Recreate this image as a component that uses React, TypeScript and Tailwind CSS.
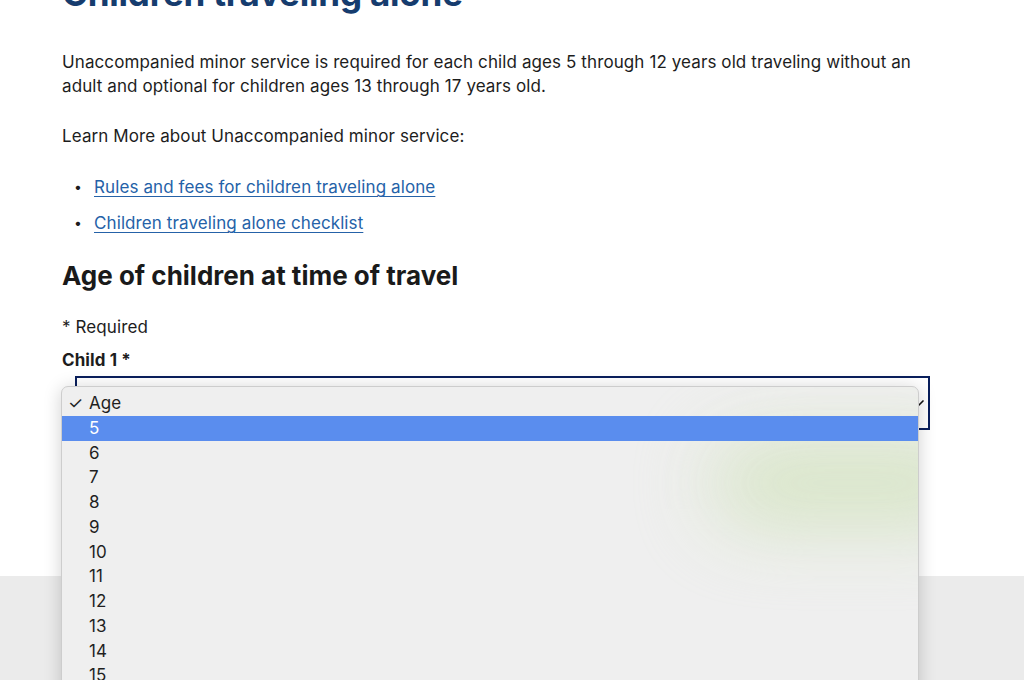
import { ChevronDown } from 'lucide-react';

const ages = ['5', '6', '7', '8', '9', '10', '11', '12', '13', '14', '15', '16', '17'];

export default function App() {
  return (
    <div className="relative flex flex-col h-[680px] overflow-hidden bg-white font-['Inter',sans-serif] text-[#1d1d1d]">
      <section className="flex flex-col shrink-0 px-[62px] h-[576px]">
        <div className="w-[868px] tracking-[0.1px]">
          <h1 className="-mt-[29px] text-[35px] leading-[44px] font-bold text-[#163c6e] tracking-[-0.2px]">
            Children traveling alone
          </h1>

          <p className="mt-[35px] text-[17px] leading-[24px]">
            Unaccompanied minor service is required for each child ages 5 through 12 years old traveling without an
            adult and optional for children ages 13 through 17 years old.
          </p>

          <p className="mt-[26px] text-[17px] leading-[24px]">Learn More about Unaccompanied minor service:</p>

          <ul className="mt-[27px] flex flex-col gap-[12px] text-[17px] leading-[24px]">
            <li className="flex items-center">
              <span className="w-[32px] pl-[12px] text-[14px]">&#8226;</span>
              <a href="#" className="text-[#2562a8] underline underline-offset-[3px] decoration-1">
                Rules and fees for children traveling alone
              </a>
            </li>
            <li className="flex items-center">
              <span className="w-[32px] pl-[12px] text-[14px]">&#8226;</span>
              <a href="#" className="text-[#2562a8] underline underline-offset-[3px] decoration-1">
                Children traveling alone checklist
              </a>
            </li>
          </ul>

          <h2 className="mt-[25px] text-[26px] leading-[32px] font-bold text-[#1a1a1a] tracking-normal">
            Age of children at time of travel
          </h2>

          <p className="mt-[23px] text-[17px] leading-[24px]">* Required</p>

          <label className="mt-[9px] block text-[17px] leading-[24px] font-bold">Child 1 *</label>

          <div className="relative mt-[4px]">
            <div className="ml-[13px] h-[54px] border-2 border-[#0a1f5c] flex items-center justify-end pr-[1px]">
              <ChevronDown className="w-4 h-4 text-[#111]" strokeWidth={2.5} />
            </div>

            {/* native select popup */}
            <div className="absolute left-[-1px] top-[10px] w-[858px] h-[320px] overflow-hidden rounded-t-[7px] border border-[#cdcdcd] bg-[#efefef] shadow-[0_2px_18px_rgba(0,0,0,0.18)]">
              <div className="absolute left-[650px] top-[56px] w-[280px] h-[80px] rounded-full bg-[#d2e3bd] opacity-90 blur-2xl pointer-events-none" />
              <div className="relative pt-[4px] text-[17px] leading-[24.75px] text-[#1f1f1f] tracking-normal">
                <div className="flex items-center">
                  <span className="w-[27px] pl-[6px] text-[17px]">&#10003;</span>
                  <span>Age</span>
                </div>
                {ages.map((age, i) => (
                  <div
                    key={age}
                    className={i === 0 ? 'pl-[27px] bg-[#5a8dee] text-white' : 'pl-[27px]'}
                  >
                    {age}
                  </div>
                ))}
              </div>
            </div>
          </div>
        </div>
      </section>

      <section className="h-[104px] shrink-0 bg-[#ebebeb]" />
    </div>
  );
}
